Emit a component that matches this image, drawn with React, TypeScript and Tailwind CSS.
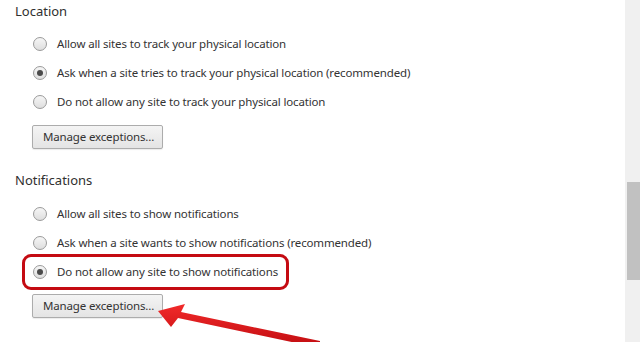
import React from 'react'

function Radio({ checked }: { checked?: boolean }) {
  return (
    <span className="w-[14px] h-[14px] rounded-full border border-[#9a9a9a] bg-gradient-to-b from-[#f6f6f6] to-[#dedede] flex items-center justify-center shrink-0">
      {checked && <span className="w-[6px] h-[6px] rounded-full bg-[#4a4a4a]" />}
    </span>
  )
}

function Option({ label, checked }: { label: string; checked?: boolean }) {
  return (
    <div className="h-[29px] flex items-center gap-[10px] pl-[33px]">
      <Radio checked={checked} />
      <span>{label}</span>
    </div>
  )
}

function ManageButton() {
  return (
    <div className="pl-[32px]">
      <button className="w-[131px] h-[24px] border border-[#acacac] rounded-[2px] bg-gradient-to-b from-[#f4f4f4] to-[#e4e4e4] text-[#333] text-left pl-[10px] shadow-[0_1px_1px_rgba(0,0,0,0.08)]">
        Manage exceptions...
      </button>
    </div>
  )
}

export default function App() {
  return (
    <div
      className="relative w-[640px] h-[342px] overflow-hidden bg-white flex text-[11.5px] tracking-[-0.15px] text-[#333]"
      style={{ fontFamily: '"Noto Sans", "Open Sans", sans-serif' }}
    >
      <div className="flex-1 pt-[1px]">
        <div className="pl-[15px] text-[13px] tracking-normal text-[#303030] h-[20px] leading-[20px]">Location</div>
        <div className="mt-[8px]">
          <Option label="Allow all sites to track your physical location" />
          <Option label="Ask when a site tries to track your physical location (recommended)" checked />
          <Option label="Do not allow any site to track your physical location" />
        </div>
        <div className="mt-[9px]">
          <ManageButton />
        </div>

        <div className="mt-[21px] pl-[15px] text-[13px] tracking-normal text-[#303030] h-[20px] leading-[20px]">Notifications</div>
        <div className="mt-[9px]">
          <Option label="Allow all sites to show notifications" />
          <Option label="Ask when a site wants to show notifications (recommended)" />
          <div className="relative">
            <Option label="Do not allow any site to show notifications" checked />
            <span className="absolute left-[22px] top-[-3px] w-[267px] h-[36px] border-[3px] border-[#c40a12] rounded-[9px]" />
          </div>
        </div>
        <div className="mt-[8px]">
          <ManageButton />
        </div>
      </div>

      <div className="w-[15px] h-full bg-[#f0f0f0] relative">
        <div className="absolute left-[2px] right-0 top-[182px] h-[98px] bg-[#c1c1c1]" />
      </div>

      <svg className="absolute left-0 top-0 pointer-events-none" width="640" height="342" viewBox="0 0 640 342">
        <defs>
          <linearGradient id="ag" x1="0" y1="0" x2="0" y2="1">
            <stop offset="0" stopColor="#f22a2a" />
            <stop offset="1" stopColor="#c00c10" />
          </linearGradient>
        </defs>
        <polygon points="158,311 185,304 181,312 320,341 320,348 178,318 171,327" fill="url(#ag)" />
      </svg>
    </div>
  )
}
